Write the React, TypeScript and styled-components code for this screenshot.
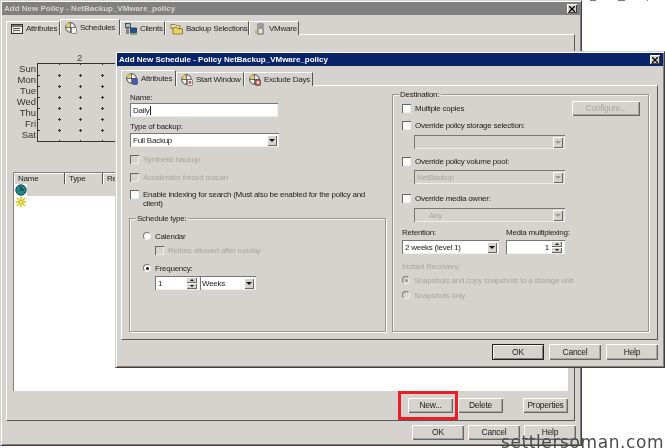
import React from "react";
import styled, { createGlobalStyle } from "styled-components";

const GlobalStyle = createGlobalStyle`
  html, body {
    margin: 0;
    padding: 0;
    background: #fff;
    overflow: hidden;
  }
  * {
    box-sizing: border-box;
  }
`;

const FACE = "#d6d3ce";

const Desktop = styled.div`
  position: relative;
  width: 665px;
  height: 448px;
  overflow: hidden;
  background: #fff;
  font-family: "Liberation Sans", Arial, sans-serif;
  font-size: 8px;
  line-height: 9px;
  letter-spacing: -0.25px;
  color: #222;
  filter: blur(0.3px);
`;

const Window = styled.div<{ $x: number; $y: number; $w: number; $h: number }>`
  position: absolute;
  left: ${(p) => p.$x}px;
  top: ${(p) => p.$y}px;
  width: ${(p) => p.$w}px;
  height: ${(p) => p.$h}px;
  display: flex;
  flex-direction: column;
  background: ${FACE};
  border: 1px solid ${FACE};
  border-right: 1px solid #404040;
  border-bottom: 1px solid #404040;
  box-shadow: inset 1px 1px #fff, inset -1px -1px #808080;
`;

const TitleBar = styled.div<{ $active?: boolean }>`
  height: 13px;
  margin: 1px 1px 0;
  padding: 0 2px;
  flex: none;
  display: flex;
  align-items: center;
  justify-content: space-between;
  background: ${(p) => (p.$active ? "#0a246a" : "#808080")};
  color: ${(p) => (p.$active ? "#fff" : "#d6d3ce")};
  font-weight: 700;
  font-size: 8px;
  letter-spacing: 0;
  white-space: nowrap;
`;

const CloseBox = styled.div`
  width: 10px;
  height: 9px;
  margin-right: 1px;
  display: flex;
  align-items: center;
  justify-content: center;
  background: ${FACE};
  box-shadow: inset 1px 1px #fff, inset -1px -1px #404040;
`;

const TabStrip = styled.div<{ $left: number; $top: number }>`
  display: flex;
  flex: none;
  height: 15px;
  margin: ${(p) => p.$top}px 0 0 ${(p) => p.$left}px;
  position: relative;
  z-index: 1;
`;

const Tab = styled.div<{ $w: number; $on?: boolean }>`
  width: ${(p) => p.$w}px;
  height: ${(p) => (p.$on ? 16 : 14)}px;
  margin-top: ${(p) => (p.$on ? -1 : 1)}px;
  padding-left: 4px;
  display: flex;
  align-items: center;
  gap: 3px;
  background: ${FACE};
  border-top: 1px solid #fff;
  border-left: 1px solid #fff;
  border-right: 1px solid #555;
  white-space: nowrap;
`;

const TabPanel = styled.div<{ $h: number; $mx: string }>`
  height: ${(p) => p.$h}px;
  margin: ${(p) => p.$mx};
  flex: none;
  border-top: 1px solid #fff;
  border-left: 1px solid #fff;
  border-right: 1px solid #555;
  border-bottom: 1px solid #555;
`;

const OuterBody = styled.div`
  display: flex;
  flex-direction: column;
  height: 100%;
  padding: 28px 6px 0 6px;
`;

const ChartArea = styled.div`
  position: relative;
  display: flex;
  height: 109px;
  flex: none;
`;

const DayColumn = styled.div`
  width: 23px;
  padding-top: 0;
  display: flex;
  flex-direction: column;
  align-items: flex-end;
  font-size: 9.5px;
  line-height: 11px;
  letter-spacing: 0;
  color: #333;
`;

const ChartBox = styled.div`
  margin-left: 1px;
  width: 110px;
  height: 79px;
  border-left: 1px solid #333;
  border-top: 1px solid #333;
  border-bottom: 1px solid #333;
`;

const ChartLabel = styled.span`
  position: absolute;
  left: 64px;
  top: -10px;
  font-size: 9.5px;
  color: #444;
`;

const ListBox = styled.div`
  height: 219px;
  flex: none;
  background: #fff;
  box-shadow: inset 1px 1px #808080, inset -1px -1px #fff;
  padding: 1px;
`;

const ListHeader = styled.div`
  display: flex;
  height: 11px;
  background: ${FACE};
`;

const HeaderCell = styled.div<{ $w: number }>`
  width: ${(p) => p.$w}px;
  padding-left: 4px;
  line-height: 11px;
  border-right: 1px solid #555;
  box-shadow: inset 1px 1px #fff;
`;

const ListRow = styled.div`
  height: 12px;
  padding-left: 1px;
  display: flex;
  align-items: center;
  background: #fff;
`;

const RowFill = styled.span`
  flex: 1;
  height: 12px;
  background: ${FACE};
`;

const ButtonRow = styled.div<{ $mt: number; $mr?: number; $gap?: number }>`
  display: flex;
  justify-content: flex-end;
  flex: none;
  gap: ${(p) => p.$gap ?? 5}px;
  margin: ${(p) => p.$mt}px ${(p) => p.$mr ?? 0}px 0 0;
`;

const Button = styled.div<{ $w: number; $h?: number; $def?: boolean; $off?: boolean; $ml?: number }>`
  width: ${(p) => p.$w}px;
  height: ${(p) => p.$h ?? 15}px;
  margin-left: ${(p) => p.$ml ?? 0}px;
  flex: none;
  display: flex;
  align-items: center;
  justify-content: center;
  background: ${FACE};
  color: ${(p) => (p.$off ? "#a8a6a0" : "#222")};
  font-size: 8.5px;
  box-shadow: ${(p) =>
    p.$def
      ? "inset 0 0 0 1px #222, inset 2px 2px #fff, inset -2px -2px #808080"
      : "inset 1px 1px #fff, inset -1px -1px #666, inset -2px -2px #a8a6a0"};
`;

const DialogBody = styled.div`
  display: flex;
  flex-direction: column;
  height: 100%;
  padding: 5px 6px 0 5px;
`;

const Columns = styled.div`
  display: flex;
  gap: 6px;
  height: 100%;
  padding: 7px 0 0 7px;
`;

const LeftCol = styled.div`
  width: 257px;
  flex: none;
  display: flex;
  flex-direction: column;
`;

const Indented = styled.div<{ $mt?: number; $ml?: number }>`
  margin-top: ${(p) => p.$mt ?? 0}px;
  margin-left: ${(p) => p.$ml ?? 1}px;
`;

const Label = styled.div<{ $mt?: number; $ml?: number; $w?: number; $off?: boolean }>`
  margin-top: ${(p) => p.$mt ?? 0}px;
  margin-left: ${(p) => p.$ml ?? 0}px;
  ${(p) => (p.$w ? `width: ${p.$w}px;` : "")}
  height: 9px;
  color: ${(p) => (p.$off ? "#a8a6a0" : "#222")};
  white-space: nowrap;
`;

const TextInput = styled.div<{ $w: number; $right?: boolean; $mt?: number }>`
  width: ${(p) => p.$w}px;
  height: 14px;
  margin-top: ${(p) => p.$mt ?? 0}px;
  padding: 0 3px;
  display: flex;
  align-items: center;
  justify-content: ${(p) => (p.$right ? "flex-end" : "flex-start")};
  background: #fff;
  box-shadow: inset 1px 1px #777, inset -1px -1px #eee;
`;

const Caret = styled.span`
  width: 1px;
  height: 9px;
  background: #222;
`;

const Combo = styled.div<{ $w: number; $off?: boolean; $inset?: number; $mt?: number; $ml?: number }>`
  width: ${(p) => p.$w}px;
  height: 14px;
  flex: none;
  margin: ${(p) => p.$mt ?? 0}px 0 0 ${(p) => p.$ml ?? 0}px;
  padding: 0 1px 0 ${(p) => p.$inset ?? 3}px;
  display: flex;
  align-items: center;
  justify-content: space-between;
  background: ${(p) => (p.$off ? FACE : "#fff")};
  color: ${(p) => (p.$off ? "#a8a6a0" : "#222")};
  box-shadow: inset 1px 1px #777, inset -1px -1px #eee;
`;

const ComboArrow = styled.span<{ $off?: boolean }>`
  width: 10px;
  height: 11px;
  margin-right: 1px;
  display: flex;
  align-items: center;
  justify-content: center;
  background: ${FACE};
  box-shadow: inset 1px 1px #fff, inset -1px -1px #666;
  &::after {
    content: "";
    border-left: 3px solid transparent;
    border-right: 3px solid transparent;
    border-top: 3px solid ${(p) => (p.$off ? "#9a9892" : "#111")};
  }
`;

const CheckRow = styled.div<{ $mt?: number; $ml?: number; $off?: boolean }>`
  margin-top: ${(p) => p.$mt ?? 0}px;
  margin-left: ${(p) => p.$ml ?? 0}px;
  display: flex;
  align-items: flex-start;
  gap: 4px;
  color: ${(p) => (p.$off ? "#a8a6a0" : "#222")};
`;

const Box = styled.span<{ $off?: boolean }>`
  width: 9px;
  height: 9px;
  flex: none;
  background: ${(p) => (p.$off ? FACE : "#fff")};
  box-shadow: inset 1px 1px #666, inset -1px -1px #eee;
`;

const Radio = styled.span<{ $on?: boolean; $off?: boolean }>`
  width: 8px;
  height: 8px;
  flex: none;
  display: flex;
  align-items: center;
  justify-content: center;
  border-radius: 50%;
  background: ${(p) => (p.$off ? FACE : "#fff")};
  border: 1px solid;
  border-color: #777 #eee #eee #777;
  &::after {
    content: "";
    display: ${(p) => (p.$on ? "block" : "none")};
    width: 3px;
    height: 3px;
    border-radius: 50%;
    background: ${(p) => (p.$off ? "#9a9892" : "#111")};
  }
`;

const Group = styled.div<{ $w: number; $h: number; $mt?: number; $pt: number; $pl: number }>`
  position: relative;
  width: ${(p) => p.$w}px;
  height: ${(p) => p.$h}px;
  margin-top: ${(p) => p.$mt ?? 0}px;
  padding: ${(p) => p.$pt}px 0 0 ${(p) => p.$pl}px;
  flex: none;
  border: 1px solid #9a9892;
  box-shadow: 1px 1px #fff, inset 1px 1px #f4f3f0;
`;

const Legend = styled.span`
  position: absolute;
  left: 6px;
  top: -5px;
  padding: 0 2px 0 1px;
  background: ${FACE};
  white-space: nowrap;
`;

const SpinRow = styled.div`
  display: flex;
  margin: 3px 0 0 12px;
`;

const SpinValue = styled.span`
  flex: 1;
`;

const Spin = styled.span<{ $ml?: number }>`
  width: 11px;
  height: 12px;
  margin-left: ${(p) => p.$ml ?? 0}px;
  flex: none;
  display: flex;
  flex-direction: column;
`;

const SpinPart = styled.span<{ $down?: boolean }>`
  height: 6px;
  display: flex;
  align-items: center;
  justify-content: center;
  background: ${FACE};
  box-shadow: inset 1px 1px #fff, inset -1px -1px #666;
  &::after {
    content: "";
    border-left: 2px solid transparent;
    border-right: 2px solid transparent;
    ${(p) => (p.$down ? "border-top: 2px solid #111;" : "border-bottom: 2px solid #111;")}
  }
`;

const SplitRow = styled.div<{ $mt?: number }>`
  display: flex;
  align-items: center;
  gap: 7px;
  margin-top: ${(p) => p.$mt ?? 0}px;
`;

const ConfigureRow = styled.div`
  display: flex;
  align-items: center;
  justify-content: space-between;
  width: 238px;
  height: 15px;
`;

const RedBox = styled.div`
  position: absolute;
  left: 398px;
  top: 391px;
  width: 60px;
  height: 29px;
  border: 3px solid #ed1c24;
`;

const Watermark = styled.div`
  position: absolute;
  left: 501px;
  top: 432px;
  font-family: "DejaVu Sans", sans-serif;
  font-size: 17px;
  line-height: 20px;
  letter-spacing: 0.6px;
  color: #4c4c4c;
  white-space: nowrap;
`;

const TopMarks = styled.div`
  position: absolute;
  left: 590px;
  top: 0;
  display: flex;
  gap: 22px;
`;

const Mark = styled.span<{ $w: number }>`
  width: ${(p) => p.$w}px;
  height: 1px;
  background: #777;
`;

const CloseIcon = () => (
  <svg width="6" height="6" viewBox="0 0 6 6">
    <path d="M0 0L6 6M6 0L0 6" stroke="#000" strokeWidth="1.3" />
  </svg>
);

// clock face with a small badge in the lower right corner, used on the schedule tabs
const ClockBadge = ({ mark, dot }: { mark: string; dot?: string }) => (
  <svg width="12" height="12" viewBox="0 0 12 12">
    <circle cx="5.5" cy="5.5" r="4.8" fill="#f4f4f0" stroke="#2c2c3a" strokeWidth="0.9" />
    <path d="M1 1h4.5v4.5H1zM5.5 5.5H10V10H5.5z" fill="#d9c14a" opacity="0.75" />
    <path d="M1 5.5h9M5.5 1v9" stroke="#3b3b48" strokeWidth="0.7" />
    <rect x="6.5" y="5.5" width="5" height="6" rx="1" fill={mark} stroke="#333" strokeWidth="0.5" />
    {dot && <circle cx="9" cy="8.5" r="1.4" fill={dot} />}
  </svg>
);

const CalendarIcon = () => (
  <svg width="12" height="12" viewBox="0 0 12 12">
    <rect x="0.5" y="1.5" width="11" height="9" fill="#f0efe8" stroke="#333" />
    <path d="M1 3h10" stroke="#2a2a3a" strokeWidth="1.2" />
    <path d="M3 5.5h6M3 7.5h6" stroke="#555" />
    <path d="M2.5 4.5v5" stroke="#777" strokeWidth="0.7" />
  </svg>
);

const ClientsIcon = () => (
  <svg width="12" height="12" viewBox="0 0 12 12">
    <rect x="0.5" y="0.5" width="5" height="4" fill="#9cc0c8" stroke="#333" strokeWidth="0.8" />
    <path d="M1 6h3M1 8h3M1 10h3" stroke="#333" />
    <rect x="5.5" y="5" width="6" height="4.5" fill="#1b4fa0" stroke="#333" strokeWidth="0.8" />
    <path d="M5 11h7" stroke="#2f8f6a" strokeWidth="1.2" />
  </svg>
);

const FolderIcon = () => (
  <svg width="13" height="12" viewBox="0 0 13 12">
    <path d="M1 1.5h4l1 1.2h4v3H1z" fill="#efe6b8" stroke="#6e5c1e" strokeWidth="0.7" />
    <path d="M3 4.5h4l1 1.2h4.5V11H3z" fill="#ecd25e" stroke="#6e5c1e" strokeWidth="0.7" />
  </svg>
);

const VmwareIcon = () => (
  <svg width="12" height="12" viewBox="0 0 12 12">
    <rect x="4" y="1" width="5" height="10" fill="#e8e6e0" stroke="#444" strokeWidth="0.8" />
    <path d="M5 3h3M5 5h3" stroke="#444" />
    <path d="M1 8h3M1 10h3" stroke="#b49a2e" />
  </svg>
);

const GlobeClock = () => (
  <svg width="12" height="12" viewBox="0 0 12 12">
    <circle cx="6" cy="6" r="5.2" fill="#1f8a80" stroke="#1a3f6a" />
    <path d="M6 2.5V6H9" stroke="#0b2540" strokeWidth="1.1" fill="none" />
  </svg>
);

const Sparkle = () => (
  <svg width="12" height="12" viewBox="0 0 12 12">
    <path d="M6 0.5V11.5M0.5 6H11.5M2 2L10 10M10 2L2 10" stroke="#d8c400" strokeWidth="1.3" />
    <circle cx="6" cy="6" r="1.8" fill="#fbf3a0" stroke="#a89a00" strokeWidth="0.5" />
  </svg>
);

const ChartTicks = () => (
  <svg width="109" height="77" viewBox="0 0 109 77">
    {[11, 22, 33, 44, 55, 66].map((y) => (
      <g key={y} stroke="#333" strokeWidth="1">
        <path d={`M0 ${y + 0.5}H2`} />
        {[21, 42, 64].map((x) => (
          <path key={x} d={`M${x - 1} ${y + 0.5}H${x + 2}M${x + 0.5} ${y - 1}V${y + 2}`} />
        ))}
      </g>
    ))}
    {[21, 42, 64].map((x) => (
      <path key={x} d={`M${x + 0.5} 0V1M${x + 0.5} 76V77`} stroke="#333" />
    ))}
  </svg>
);

const days = ["Sun", "Mon", "Tue", "Wed", "Thu", "Fri", "Sat"];

function PolicyWindow() {
  return (
    <Window $x={0} $y={0} $w={582} $h={446}>
      <TitleBar>
        <span>Add New Policy - NetBackup_VMware_policy</span>
        <CloseBox>
          <CloseIcon />
        </CloseBox>
      </TitleBar>
      <TabStrip $left={5} $top={5}>
        <Tab $w={54}>
          <CalendarIcon />
          Attributes
        </Tab>
        <Tab $w={60} $on>
          <ClockBadge mark="#f4f4f0" />
          Schedules
        </Tab>
        <Tab $w={45}>
          <ClientsIcon />
          Clients
        </Tab>
        <Tab $w={84}>
          <FolderIcon />
          Backup Selections
        </Tab>
        <Tab $w={50}>
          <VmwareIcon />
          VMware
        </Tab>
      </TabStrip>
      <TabPanel $h={387} $mx="-1px 6px 0 5px">
        <OuterBody>
          <ChartArea>
            <ChartLabel>2</ChartLabel>
            <DayColumn>
              {days.map((d) => (
                <div key={d}>{d}</div>
              ))}
            </DayColumn>
            <ChartBox>
              <ChartTicks />
            </ChartBox>
          </ChartArea>
          <ListBox>
            <ListHeader>
              <HeaderCell $w={51}>Name</HeaderCell>
              <HeaderCell $w={38}>Type</HeaderCell>
              <HeaderCell $w={60}>Re</HeaderCell>
            </ListHeader>
            <ListRow>
              <GlobeClock />
              <RowFill />
            </ListRow>
            <ListRow>
              <Sparkle />
            </ListRow>
          </ListBox>
          <ButtonRow $mt={7}>
            <Button $w={45}>New...</Button>
            <Button $w={45}>Delete</Button>
            <Button $w={45} $ml={15}>
              Properties
            </Button>
          </ButtonRow>
        </OuterBody>
      </TabPanel>
      <ButtonRow $mt={4} $mr={5} $gap={4}>
        <Button $w={52}>OK</Button>
        <Button $w={52}>Cancel</Button>
        <Button $w={52}>Help</Button>
      </ButtonRow>
    </Window>
  );
}

function ScheduleLeft() {
  return (
    <LeftCol>
      <Indented>
        <Label>Name:</Label>
        <TextInput $w={148} $mt={1}>
          Daily
          <Caret />
        </TextInput>
        <Label $mt={5}>Type of backup:</Label>
        <Combo $w={149} $mt={2}>
          Full Backup
          <ComboArrow />
        </Combo>
        <CheckRow $mt={8} $off>
          <Box $off />
          Synthetic backup
        </CheckRow>
        <CheckRow $mt={9} $off>
          <Box $off />
          Accelerator forced rescan
        </CheckRow>
        <CheckRow $mt={8}>
          <Box />
          <span>
            Enable indexing for search (Must also be enabled for the policy and
            <br />
            client)
          </span>
        </CheckRow>
      </Indented>
      <Group $w={257} $h={114} $mt={10} $pt={13} $pl={13}>
        <Legend>Schedule type:</Legend>
        <CheckRow>
          <Radio />
          Calendar
        </CheckRow>
        <CheckRow $mt={5} $ml={12} $off>
          <Box $off />
          Retries allowed after runday
        </CheckRow>
        <CheckRow $mt={9}>
          <Radio $on />
          Frequency:
        </CheckRow>
        <SpinRow>
          <TextInput $w={45}>
            <SpinValue>1</SpinValue>
            <Spin>
              <SpinPart />
              <SpinPart $down />
            </Spin>
          </TextInput>
          <Combo $w={56} $inset={2}>
            Weeks
            <ComboArrow />
          </Combo>
        </SpinRow>
      </Group>
    </LeftCol>
  );
}

function ScheduleRight() {
  return (
    <Group $w={257} $h={238} $mt={1} $pt={6} $pl={9}>
      <Legend>Destination:</Legend>
      <ConfigureRow>
        <CheckRow>
          <Box />
          Multiple copies
        </CheckRow>
        <Button $w={68} $off>
          Configure...
        </Button>
      </ConfigureRow>
      <CheckRow $mt={5}>
        <Box />
        Override policy storage selection:
      </CheckRow>
      <Combo $w={151} $off $mt={5} $ml={12}>
        <span />
        <ComboArrow $off />
      </Combo>
      <CheckRow $mt={8}>
        <Box />
        Override policy volume pool:
      </CheckRow>
      <Combo $w={151} $off $mt={4} $ml={12}>
        NetBackup
        <ComboArrow $off />
      </Combo>
      <CheckRow $mt={10}>
        <Box />
        Override media owner:
      </CheckRow>
      <Combo $w={151} $off $inset={15} $mt={5} $ml={12}>
        Any
        <ComboArrow $off />
      </Combo>
      <SplitRow $mt={6}>
        <Label $w={97}>Retention:</Label>
        <Label>Media multiplexing:</Label>
      </SplitRow>
      <SplitRow $mt={3}>
        <Combo $w={97}>
          2 weeks (level 1)
          <ComboArrow />
        </Combo>
        <TextInput $w={59} $right>
          1
          <Spin $ml={2}>
            <SpinPart />
            <SpinPart $down />
          </Spin>
        </TextInput>
      </SplitRow>
      <Label $mt={8} $off>
        Instant Recovery:
      </Label>
      <CheckRow $mt={5} $off>
        <Radio $on $off />
        Snapshots and copy snapshots to a storage unit
      </CheckRow>
      <CheckRow $mt={6} $off>
        <Radio $off />
        Snapshots only
      </CheckRow>
    </Group>
  );
}

function ScheduleDialog() {
  return (
    <Window $x={115} $y={51} $w={550} $h={317}>
      <TitleBar $active>
        <span>Add New Schedule - Policy NetBackup_VMware_policy</span>
        <CloseBox>
          <CloseIcon />
        </CloseBox>
      </TitleBar>
      <DialogBody>
        <TabStrip $left={0} $top={0}>
          <Tab $w={55} $on>
            <ClockBadge mark="#3b5fc0" />
            Attributes
          </Tab>
          <Tab $w={68}>
            <ClockBadge mark="#f4f4f0" dot="#d8484a" />
            Start Window
          </Tab>
          <Tab $w={69}>
            <ClockBadge mark="#d8484a" dot="#f4f4f0" />
            Exclude Days
          </Tab>
        </TabStrip>
        <TabPanel $h={255} $mx="-1px 0 0 0">
          <Columns>
            <ScheduleLeft />
            <ScheduleRight />
          </Columns>
        </TabPanel>
        <ButtonRow $mt={4}>
          <Button $w={52} $h={16} $def>
            OK
          </Button>
          <Button $w={52} $h={16}>
            Cancel
          </Button>
          <Button $w={52} $h={16}>
            Help
          </Button>
        </ButtonRow>
      </DialogBody>
    </Window>
  );
}

export default function App() {
  return (
    <>
      <GlobalStyle />
      <Desktop>
        <TopMarks>
          <Mark $w={6} />
          <Mark $w={7} />
          <Mark $w={1} />
        </TopMarks>
        <PolicyWindow />
        <ScheduleDialog />
        <RedBox />
        <Watermark>settlersoman.com</Watermark>
      </Desktop>
    </>
  );
}
